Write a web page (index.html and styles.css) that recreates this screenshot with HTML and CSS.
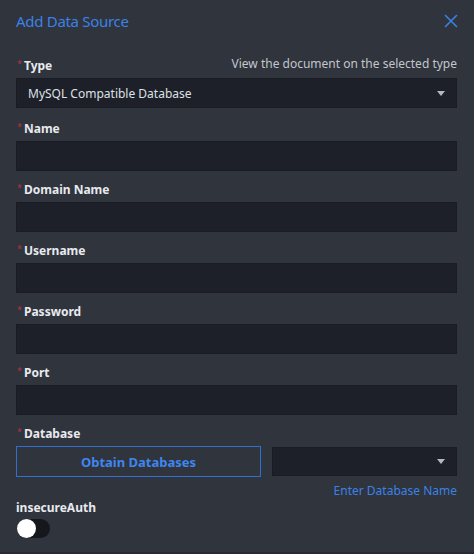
FILE: index.html
```html
<!DOCTYPE html>
<html lang="en">
<head>
<meta charset="utf-8">
<title>Add Data Source</title>
<link rel="stylesheet" href="styles.css">
</head>
<body>
<div class="dialog">
  <header class="dialog-head">
    <h1 class="dialog-title">Add Data Source</h1>
    <svg class="close" viewBox="0 0 14 14" width="14" height="14" aria-label="Close">
      <path d="M1.5 1.5 L12.5 12.5 M12.5 1.5 L1.5 12.5" stroke="currentColor" stroke-width="1.6" fill="none" stroke-linecap="round"/>
    </svg>
  </header>

  <form class="form">
    <div class="field field-type">
      <div class="label-row">
        <label class="label req">Type</label>
        <span class="doc-link">View the document on the selected type</span>
      </div>
      <div class="select">
        <span class="select-value">MySQL Compatible Database</span>
        <span class="caret"></span>
      </div>
    </div>

    <div class="field">
      <label class="label req">Name</label>
      <div class="input"></div>
    </div>

    <div class="field">
      <label class="label req">Domain Name</label>
      <div class="input"></div>
    </div>

    <div class="field">
      <label class="label req">Username</label>
      <div class="input"></div>
    </div>

    <div class="field">
      <label class="label req">Password</label>
      <div class="input"></div>
    </div>

    <div class="field">
      <label class="label req">Port</label>
      <div class="input"></div>
    </div>

    <div class="field field-db">
      <label class="label req">Database</label>
      <div class="db-row">
        <button type="button" class="btn-outline">Obtain Databases</button>
        <div class="select select-db"><span class="caret"></span></div>
      </div>
      <div class="hint-row"><span class="hint-link">Enter Database Name</span></div>
    </div>

    <div class="field">
      <label class="label">insecureAuth</label>
      <span class="switch"><span class="knob"></span></span>
    </div>
  </form>
</div>
</body>
</html>
```

FILE: styles.css
```css
html, body {
  margin: 0;
  padding: 0;
  height: 100%;
}

body {
  background: #2f343d;
  font-family: "Noto Sans", "Open Sans", "Liberation Sans", sans-serif;
  color: #e4e6ea;
}

.dialog {
  box-sizing: border-box;
  height: 554px;
  padding: 0 17px 0 16px;
  border-left: 2px solid #2a2e36;
  border-bottom: 2px solid #272b33;
  margin-left: -2px;
}

.dialog-head {
  display: flex;
  align-items: center;
  justify-content: space-between;
  height: 42px;
  margin-bottom: 12px;
}

.dialog-title {
  margin: 0;
  font-size: 15px;
  font-weight: 400;
  color: #3c82e6;
  letter-spacing: -0.3px;
}

.close {
  color: #3c82e6;
  margin-right: -1px;
}

.form {
  display: flex;
  flex-direction: column;
}

.field {
  display: flex;
  flex-direction: column;
  margin-bottom: 7px;
}

.field-type {
  margin-bottom: 9px;
}

.label-row {
  display: flex;
  justify-content: space-between;
  align-items: center;
}

.label {
  display: block;
  height: 19px;
  line-height: 19px;
  margin-bottom: 5px;
  font-size: 12px;
  font-weight: 700;
  color: #e8eaee;
}

/* required marker before the label text */
.label.req::before {
  content: "*";
  color: #b8323c;
  font-size: 9px;
  font-weight: 400;
  vertical-align: 3px;
  margin-left: 1px;
  margin-right: 2px;
}

.doc-link {
  font-size: 12px;
  color: #c3c6cc;
  margin-bottom: 5px;
}

.input,
.select {
  box-sizing: border-box;
  height: 30px;
  background: #1d2029;
  border: 1px solid #191c22;
}

.select {
  display: flex;
  align-items: center;
  justify-content: space-between;
  padding: 0 11px;
}

.select-value {
  font-size: 12px;
  color: #dfe1e5;
}

.caret {
  width: 0;
  height: 0;
  border-left: 4.5px solid transparent;
  border-right: 4.5px solid transparent;
  border-top: 5px solid #b4b7bd;
}

.db-row {
  display: flex;
  gap: 11px;
}

.btn-outline {
  box-sizing: border-box;
  flex: 0 0 245px;
  height: 31px;
  background: transparent;
  border: 1px solid #2f6fd0;
  color: #3f86ee;
  font-family: inherit;
  font-size: 13px;
  font-weight: 700;
  cursor: pointer;
}

.select-db {
  flex: 1;
  justify-content: flex-end;
  margin-top: 1px;
  height: 29px;
}

.field-db {
  margin-bottom: 0;
}

.hint-row {
  display: flex;
  justify-content: flex-end;
  margin-top: 7px;
}

.hint-link {
  font-size: 12px;
  color: #3c82e6;
  line-height: 14px;
}

.switch {
  position: relative;
  display: inline-block;
  box-sizing: border-box;
  width: 33px;
  height: 19px;
  border-radius: 10px;
  background: #15171c;
  margin-top: -3px;
  margin-left: 1px;
}

.knob {
  position: absolute;
  left: 0;
  top: 0;
  width: 19px;
  height: 19px;
  border-radius: 50%;
  background: #ffffff;
}
```
